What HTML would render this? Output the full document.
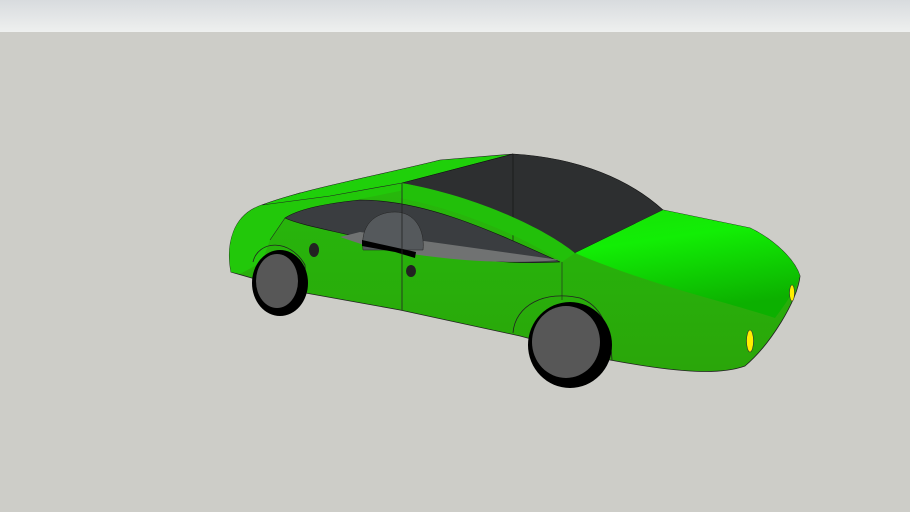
<!DOCTYPE html>
<html><head><meta charset="utf-8"><style>
html,body{margin:0;padding:0;width:910px;height:512px;overflow:hidden;background:#cdcdc8}
.sky{position:absolute;left:0;top:0;width:910px;height:32px;background:linear-gradient(#d8dbde,#eef0ef)}
svg{position:absolute;left:0;top:0}
</style></head><body>
<div class="sky"></div>
<svg width="910" height="512" viewBox="0 0 910 512">
<defs>
<linearGradient id="hood" x1="0" y1="0" x2="0.3" y2="1">
<stop offset="0" stop-color="#18e008"/><stop offset="0.35" stop-color="#12ee05"/><stop offset="1" stop-color="#0cb000"/>
</linearGradient>
<linearGradient id="side" x1="0" y1="0" x2="0" y2="1">
<stop offset="0" stop-color="#27b80c"/><stop offset="1" stop-color="#2aa60a"/>
</linearGradient>
</defs>
<path d="M231,272 C226,245 232,215 262,205 L300,193 L402,183 L663,210 L750,228 C775,240 795,260 800,276 C798,300 770,345 745,366 C720,375 680,373 610,360 L520,336 L400,310 L300,292 Z" fill="url(#side)" stroke="#222" stroke-width="0.8"/>
<path d="M231,272 C226,245 232,215 262,205 L300,193 L402,183 L405,190 L330,205 L285,218 L270,240 L262,262 L240,274 Z" fill="#22c80a"/>
<path d="M262,205 C300,190 380,175 440,160 L513,154 L402,183 L330,196 Z" fill="#1fd00a" stroke="#222" stroke-width="0.6"/>
<path d="M402,183 L513,154 C580,158 630,180 663,210 L575,253 C520,220 460,195 402,183 Z" fill="#2d2f30" stroke="#111" stroke-width="0.6"/>
<path d="M513,154 L513,255" stroke="#111" stroke-width="0.6"/>
<path d="M663,210 L750,228 C775,240 795,260 800,276 C795,290 785,305 775,318 C720,300 650,285 575,253 Z" fill="url(#hood)"/>
<path d="M402,183 C470,195 540,225 575,253 L562,262 C520,235 460,210 400,198 Z" fill="#22c00a"/>
<path d="M285,218 C300,208 330,203 360,200 C420,200 480,225 560,262 C500,265 440,258 370,240 C330,230 300,225 285,218 Z" fill="#3a3d40" stroke="#111" stroke-width="0.6"/>
<path d="M340,237 L360,232 L560,260 C500,265 440,260 370,247 Z" fill="#707272"/>
<path d="M363,250 C360,225 375,212 395,212 C415,212 425,230 423,250 Z" fill="#55595c" stroke="#222" stroke-width="0.5"/>
<path d="M362,246 L395,252 L415,258 L416,252 L362,240 Z" fill="#000"/>
<path d="M402,183 L402,310" stroke="#222" stroke-width="0.8"/>
<path d="M562,262 L562,300" stroke="#222" stroke-width="0.6"/>
<path d="M285,218 L270,240" stroke="#222" stroke-width="0.6"/>
<ellipse cx="314" cy="250" rx="5" ry="7" fill="#222"/>
<ellipse cx="411" cy="271" rx="5" ry="6" fill="#222"/>
<path d="M253,262 C258,240 290,238 305,265 L306,290" fill="none" stroke="#222" stroke-width="0.8"/>
<path d="M513,333 C515,305 545,290 580,298 C600,305 610,325 612,360" fill="none" stroke="#222" stroke-width="0.8"/>
<ellipse cx="280" cy="283" rx="28" ry="33" fill="#000"/>
<ellipse cx="277" cy="281" rx="21" ry="27" fill="#575757"/>
<ellipse cx="570" cy="345" rx="42" ry="43" fill="#000"/>
<ellipse cx="566" cy="342" rx="34" ry="36" fill="#575757"/>
<ellipse cx="750" cy="341" rx="3.5" ry="11" fill="#ffef00" stroke="#333" stroke-width="0.6"/>
<ellipse cx="792" cy="293" rx="2.5" ry="8" fill="#ffef00" stroke="#333" stroke-width="0.6"/>
</svg>
</body></html>
